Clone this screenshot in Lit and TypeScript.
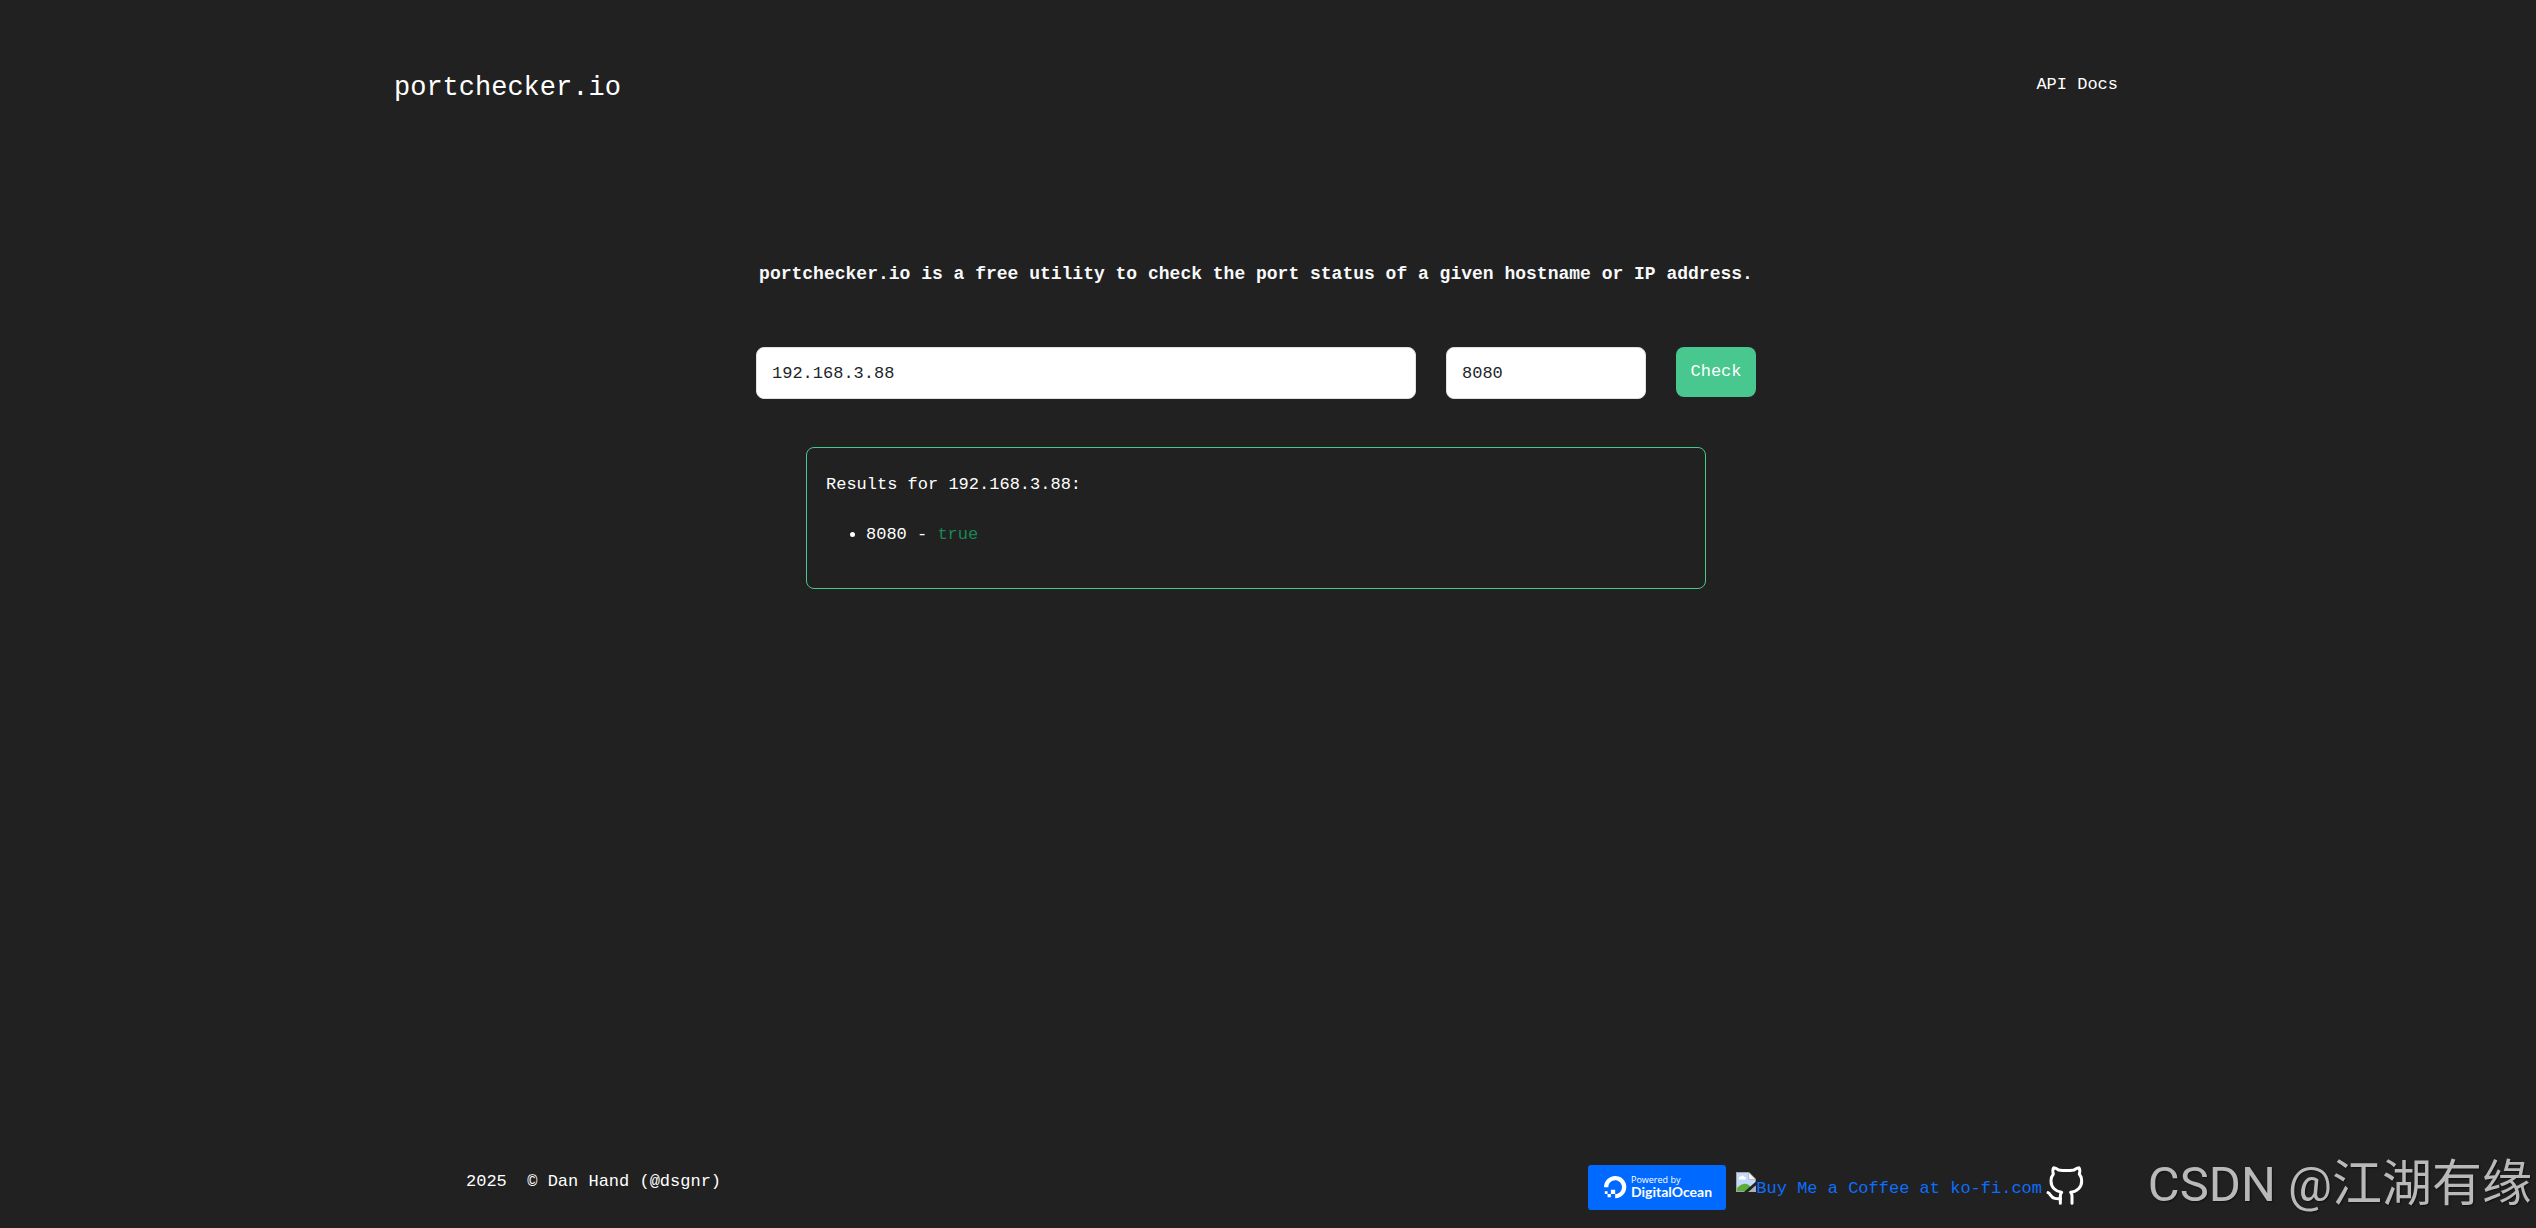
import { LitElement, html, css, svg } from "lit";
import { customElement, state } from "lit/decorators.js";

interface PortResult {
  port: number;
  open: boolean;
}

const digitalOceanBadge = svg`
  <svg class="badge" viewBox="0 0 138 45" role="img" aria-label="Powered by DigitalOcean">
    <rect width="138" height="45" rx="3" fill="#0069ff" />
    <g transform="translate(16 11) scale(0.93)" fill="#fff">
      <path d="M12.04 0C5.408-.02.005 5.37.005 11.992h4.638c0-4.923 4.882-8.731 10.064-6.855a6.95 6.95 0 014.147 4.148c1.889 5.177-1.924 10.055-6.84 10.064v-4.61H7.391v4.623h4.61V24c7.86 0 13.967-7.588 11.397-15.83-1.115-3.59-3.985-6.446-7.575-7.575A12.8 12.8 0 0012.039 0zM7.39 19.362H3.828v3.564H7.39zm-3.563 0V16.38H.85v2.982h2.978z" />
    </g>
    <text class="badge-small" x="43" y="18">Powered by</text>
    <text class="badge-name" x="43" y="32">DigitalOcean</text>
  </svg>`;

const missingImage = svg`
  <svg class="missing" viewBox="0 0 20 20" aria-hidden="true">
    <path d="M0 0H13L20 7V20H0Z" fill="#a3a3a3" />
    <path d="M1 1H12.500V7.500H19V19H1Z" fill="#c3d9fb" />
    <path d="M13 1V7H19Z" fill="#f3f3f3" />
    <path d="M3 7.500a1.500 1.500 0 0 1 1-2.500a2.500 2.500 0 0 1 4.600 0a1.500 1.500 0 0 1 1 2.500Z" fill="#fff" />
    <path d="M1 19V16C5 12 9 11 12 12.500L15 15L19 19Z" fill="#5bad3a" />
    <path d="M20 9.500L8 20H12L20 13.500Z" fill="#212121" />
    <path d="M20 13.500L12.500 20H20Z" fill="#a9b0b8" />
  </svg>`;

const githubMark = svg`
  <svg class="github" viewBox="0 0 120 120" role="img" aria-label="GitHub"
    fill="none" stroke="#fff" stroke-width="9" stroke-linecap="round" stroke-linejoin="round">
    <path d="M43 115V92Q43 86 47 82C29 80 15 67 15 48C15 39 18 32 22 27C20 20 20 13 23 8C29 8 33 11 38 15C52 17 70 17 84 15C89 11 93 8 99 8C102 13 102 20 100 27C104 32 107 39 107 48C107 67 93 80 74 82Q78 86 78 92V115" />
    <path d="M6 83C14 86 14 98 26 100Q34 102 43 101" />
  </svg>`;

@customElement("app-root")
export class AppRoot extends LitElement {
  @state() private host = "192.168.3.88";
  @state() private port = "8080";
  @state() private checkedHost = "192.168.3.88";
  @state() private results: PortResult[] = [{ port: 8080, open: true }];

  static styles = css`
    :host {
      position: relative;
      display: flex;
      flex-direction: column;
      box-sizing: border-box;
      min-height: 100vh;
      padding-right: 24px;
      background: #212121;
      color: #fff;
      font: 17px/30px "Liberation Mono", monospace;
    }
    a {
      color: inherit;
      text-decoration: none;
    }
    .header,
    .footer {
      box-sizing: border-box;
      display: flex;
      justify-content: space-between;
      align-items: flex-start;
      width: 100%;
      max-width: 1724px;
      margin: 0 auto;
    }
    .header {
      padding: 68px 0 52px;
    }
    .brand {
      font-size: 27px;
      line-height: 40px;
    }
    .nav {
      line-height: 34px;
    }
    .main {
      flex: 1;
      display: flex;
      flex-direction: column;
      align-items: center;
      padding-top: 99px;
    }
    .intro {
      margin: 0 0 58px;
      font-size: 18px;
      font-weight: 700;
      color: #f8f9fa;
    }
    .form {
      display: flex;
      align-items: flex-start;
      gap: 30px;
      width: 100%;
      max-width: 1000px;
      margin-bottom: 48px;
    }
    .field {
      box-sizing: border-box;
      min-width: 0;
      height: 52px;
      padding: 0 15px;
      border: 1px solid #dee2e6;
      border-radius: 8px;
      background: #fff;
      color: #212529;
      font: inherit;
    }
    .field-host {
      flex: 1;
    }
    .field-port {
      width: 200px;
    }
    .check {
      width: 80px;
      height: 50px;
      padding: 0;
      border: 0;
      border-radius: 8px;
      background: #48c78e;
      color: #fff;
      font: inherit;
    }
    .results {
      box-sizing: border-box;
      width: 100%;
      max-width: 900px;
      padding: 22px 20px 38px 19px;
      border: 1px solid #48c78e;
      border-radius: 8px;
    }
    .results-title {
      margin: 0 0 20px;
    }
    .results-list {
      margin: 0;
      padding-left: 40px;
    }
    .open {
      color: #198754;
    }
    .closed {
      color: #dc3545;
    }
    .footer {
      padding: 0 32px 18px 72px;
    }
    .copyright {
      padding-top: 2px;
      white-space: pre;
    }
    .links {
      display: flex;
      align-items: flex-start;
    }
    .links a {
      display: flex;
    }
    .badge {
      width: 138px;
      height: 45px;
      margin-right: 10px;
    }
    .badge-small {
      font: 9px "Open Sans", sans-serif;
      fill: #fff;
    }
    .badge-name {
      font: 700 14px Lato, sans-serif;
      fill: #fff;
    }
    .links .coffee {
      padding-top: 7px;
      margin-right: 4px;
      color: #0d6efd;
    }
    .coffee-text {
      padding-top: 2px;
    }
    .missing {
      width: 20px;
      height: 20px;
    }
    .github {
      width: 40px;
      height: 40px;
    }
    .watermark {
      position: absolute;
      right: 4px;
      bottom: 13px;
      font: 49px/60px Roboto, "Noto Sans CJK SC", sans-serif;
      color: #b9b9b9;
      text-shadow: 1px 1px 2px #0008;
      pointer-events: none;
    }
    .watermark-name {
      font-size: 50px;
    }
  `;

  private submit(event: Event) {
    event.preventDefault();
    this.checkedHost = this.host;
    this.results = [{ port: Number(this.port), open: true }];
  }

  render() {
    return html`
      <header class="header">
        <a class="brand" href="/">portchecker.io</a>
        <nav class="nav"><a href="/docs">API Docs</a></nav>
      </header>
      <main class="main">
        <p class="intro">
          portchecker.io is a free utility to check the port status of a given hostname or IP address.
        </p>
        <form class="form" @submit=${this.submit}>
          <input
            class="field field-host"
            type="text"
            aria-label="Hostname or IP address"
            .value=${this.host}
            @input=${(e: Event) => (this.host = (e.target as HTMLInputElement).value)}
          />
          <input
            class="field field-port"
            type="text"
            inputmode="numeric"
            aria-label="Port"
            .value=${this.port}
            @input=${(e: Event) => (this.port = (e.target as HTMLInputElement).value)}
          />
          <button class="check" type="submit">Check</button>
        </form>
        <section class="results">
          <p class="results-title">Results for ${this.checkedHost}:</p>
          <ul class="results-list">
            ${this.results.map(
              (r) => html`<li>${r.port} - <span class=${r.open ? "open" : "closed"}>${r.open}</span></li>`
            )}
          </ul>
        </section>
      </main>
      <footer class="footer">
        <div class="copyright">2025  © <a href="https://github.com/dsgnr">Dan Hand (@dsgnr)</a></div>
        <div class="links">
          <a href="https://www.digitalocean.com/">${digitalOceanBadge}</a>
          <a class="coffee" href="https://ko-fi.com/">
            ${missingImage}<span class="coffee-text">Buy Me a Coffee at ko-fi.com</span>
          </a>
          <a href="https://github.com/dsgnr/portchecker.io">${githubMark}</a>
        </div>
      </footer>
      <div class="watermark">CSDN @<span class="watermark-name">江湖有缘</span></div>
    `;
  }
}
